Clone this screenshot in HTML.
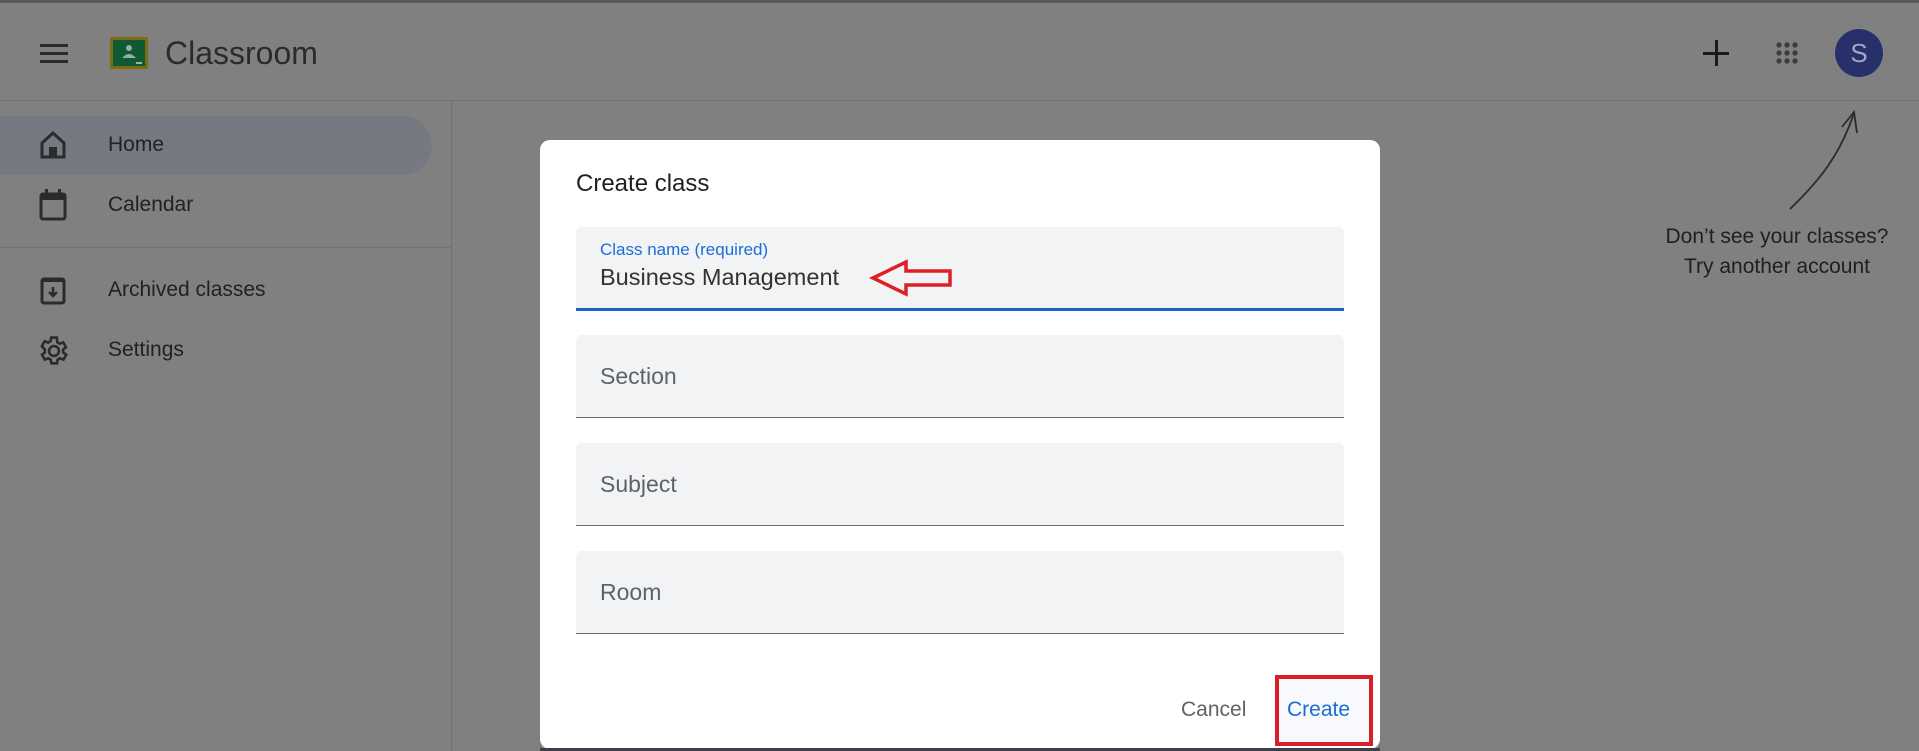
<!DOCTYPE html>
<html><head><meta charset="utf-8"><style>
*{margin:0;padding:0;box-sizing:border-box}
body{width:1919px;height:751px;overflow:hidden;background:#808080;font-family:"Liberation Sans",sans-serif;position:relative}
.abs{position:absolute}
.t{white-space:nowrap}
.field{position:absolute;left:576px;width:768px;height:83px;background:#f1f3f4;border-radius:6px 6px 0 0;border-bottom:1px solid #6b6b6b}
.ph{position:absolute;left:24px;top:28px;font-size:23px;color:#5f6368}
.nav{position:absolute;left:108px;font-size:21px;color:#202124}
</style></head><body>
<div class="abs" style="left:0;top:0;width:1919px;height:3px;background:#5a5a5a"></div>
<div class="abs" style="left:0;top:100px;width:1919px;height:1px;background:#727272"></div>
<div class="abs" style="left:40px;top:44px;width:28px;height:3px;background:#2b2b2b"></div>
<div class="abs" style="left:40px;top:52px;width:28px;height:3px;background:#2b2b2b"></div>
<div class="abs" style="left:40px;top:60px;width:28px;height:3px;background:#2b2b2b"></div>
<svg class="abs" style="left:109px;top:36px" width="40" height="34" viewBox="0 0 40 34">
<rect x="1" y="1" width="38" height="32" rx="2" fill="#7c6a14"/>
<rect x="4" y="4" width="32" height="26" fill="#0f5a33"/>
<circle cx="20" cy="12" r="3" fill="#9aa"/>
<path d="M13 22 q7-8 14 0z" fill="#9aa"/>
<rect x="27" y="26" width="6" height="2" fill="#aaa"/>
</svg>
<div class="abs t" style="left:165px;top:35px;font-size:32px;color:#2b2b2b">Classroom</div>
<div class="abs" style="left:0;top:116px;width:432px;height:59px;background:#757a82;border-radius:0 30px 30px 0"></div>
<div class="abs" style="left:451px;top:101px;width:1px;height:650px;background:#727272"></div>
<div class="abs" style="left:0;top:247px;width:451px;height:1px;background:#727272"></div>
<svg class="abs" style="left:40px;top:131px" width="26" height="28" viewBox="0 0 26 28"><path d="M2 12 L13 2 L24 12 V26 H2Z" fill="none" stroke="#2b2b2b" stroke-width="3"/><rect x="9" y="16" width="8" height="10" fill="#2b2b2b"/></svg>
<svg class="abs" style="left:39px;top:189px" width="28" height="32" viewBox="0 0 28 32"><rect x="2" y="5" width="24" height="25" rx="2" fill="none" stroke="#2b2b2b" stroke-width="3"/><rect x="2" y="5" width="24" height="6" fill="#2b2b2b"/><rect x="6" y="0" width="3" height="6" fill="#2b2b2b"/><rect x="19" y="0" width="3" height="6" fill="#2b2b2b"/></svg>
<svg class="abs" style="left:40px;top:275px" width="26" height="30" viewBox="0 0 26 30"><rect x="2" y="4" width="22" height="24" rx="2" fill="none" stroke="#2b2b2b" stroke-width="3"/><path d="M2 5 H24" stroke="#2b2b2b" stroke-width="4"/><path d="M13 12 V21 M9 17 L13 21 L17 17" fill="none" stroke="#2b2b2b" stroke-width="2.5"/></svg>
<svg class="abs" style="left:37px;top:334px" width="34" height="34" viewBox="0 0 24 24"><path d="M19.4 13c.04-.3.1-.7.1-1s-.03-.7-.1-1l2.1-1.6-2-3.5-2.5 1a7 7 0 0 0-1.7-1L15 2.5h-4l-.4 2.6c-.6.2-1.2.6-1.7 1l-2.5-1-2 3.5L6.6 11c-.04.3-.1.7-.1 1s.03.7.1 1l-2.1 1.6 2 3.5 2.5-1c.5.4 1.1.7 1.7 1l.4 2.6h4l.4-2.6c.6-.3 1.2-.6 1.7-1l2.5 1 2-3.5zM13 15.5a3.5 3.5 0 1 1 0-7 3.5 3.5 0 0 1 0 7z" transform="translate(-1 0)" fill="none" stroke="#2b2b2b" stroke-width="1.8"/></svg>
<div class="nav t" style="top:133px">Home</div>
<div class="nav t" style="top:193px">Calendar</div>
<div class="nav t" style="top:278px">Archived classes</div>
<div class="nav t" style="top:338px">Settings</div>
<div class="abs" style="left:1703px;top:52px;width:26px;height:3px;background:#1a1a1a"></div>
<div class="abs" style="left:1715px;top:40px;width:3px;height:26px;background:#1a1a1a"></div>
<svg class="abs" style="left:1775px;top:41px" width="24" height="24" viewBox="0 0 24 24" fill="#3a3a3a">
<circle cx="4" cy="4" r="2.6"/><circle cx="12" cy="4" r="2.6"/><circle cx="20" cy="4" r="2.6"/>
<circle cx="4" cy="12" r="2.6"/><circle cx="12" cy="12" r="2.6"/><circle cx="20" cy="12" r="2.6"/>
<circle cx="4" cy="20" r="2.6"/><circle cx="12" cy="20" r="2.6"/><circle cx="20" cy="20" r="2.6"/></svg>
<div class="abs" style="left:1835px;top:29px;width:48px;height:48px;border-radius:50%;background:#27306a;color:#9fa6c8;font-size:26px;text-align:center;line-height:48px">S</div>
<svg class="abs" style="left:1780px;top:105px" width="80" height="110" viewBox="0 0 80 110" fill="none" stroke="#2b2b2b" stroke-width="1.8"><path d="M10 104 C40 75 60 50 74 8"/><path d="M62 22 L74 7 L77 28"/></svg>
<div class="abs t" style="left:1577px;top:222px;width:400px;text-align:center;font-size:21px;color:#1f1f1f;line-height:30px">Don’t see your classes?<br>Try another account</div>
<div class="abs" style="left:540px;top:140px;width:840px;height:609px;background:#fff;border-radius:10px"></div>
<div class="abs t" style="left:576px;top:170px;font-size:24px;color:#202124">Create class</div>
<div class="field" style="top:227px;border-bottom:3px solid #1a63c8;height:84px">
<div class="abs t" style="left:24px;top:13px;font-size:17px;color:#1a6ed6">Class name (required)</div>
<div class="abs t" style="left:24px;top:37px;font-size:23.5px;color:#333">Business Management</div>
</div>
<svg class="abs" style="left:868px;top:258px" width="88" height="40" viewBox="0 0 88 40"><path d="M5 20 L38 4 V13 H82 V27 H38 V36 Z" fill="none" stroke="#e01e26" stroke-width="3.5" stroke-linejoin="miter"/></svg>
<div class="field" style="top:335px"><div class="ph t">Section</div></div>
<div class="field" style="top:443px"><div class="ph t">Subject</div></div>
<div class="field" style="top:551px"><div class="ph t">Room</div></div>
<div class="abs t" style="left:1181px;top:698px;font-size:21px;color:#5f6368">Cancel</div>
<div class="abs" style="left:1275px;top:675px;width:98px;height:71px;border:4px solid #d9202a;background:#f7f9fd"></div>
<div class="abs t" style="left:1287px;top:698px;font-size:21px;color:#1a6ed6">Create</div>
<div class="abs" style="left:540px;top:748px;width:840px;height:3px;background:#3a3f4a"></div>
</body></html>
